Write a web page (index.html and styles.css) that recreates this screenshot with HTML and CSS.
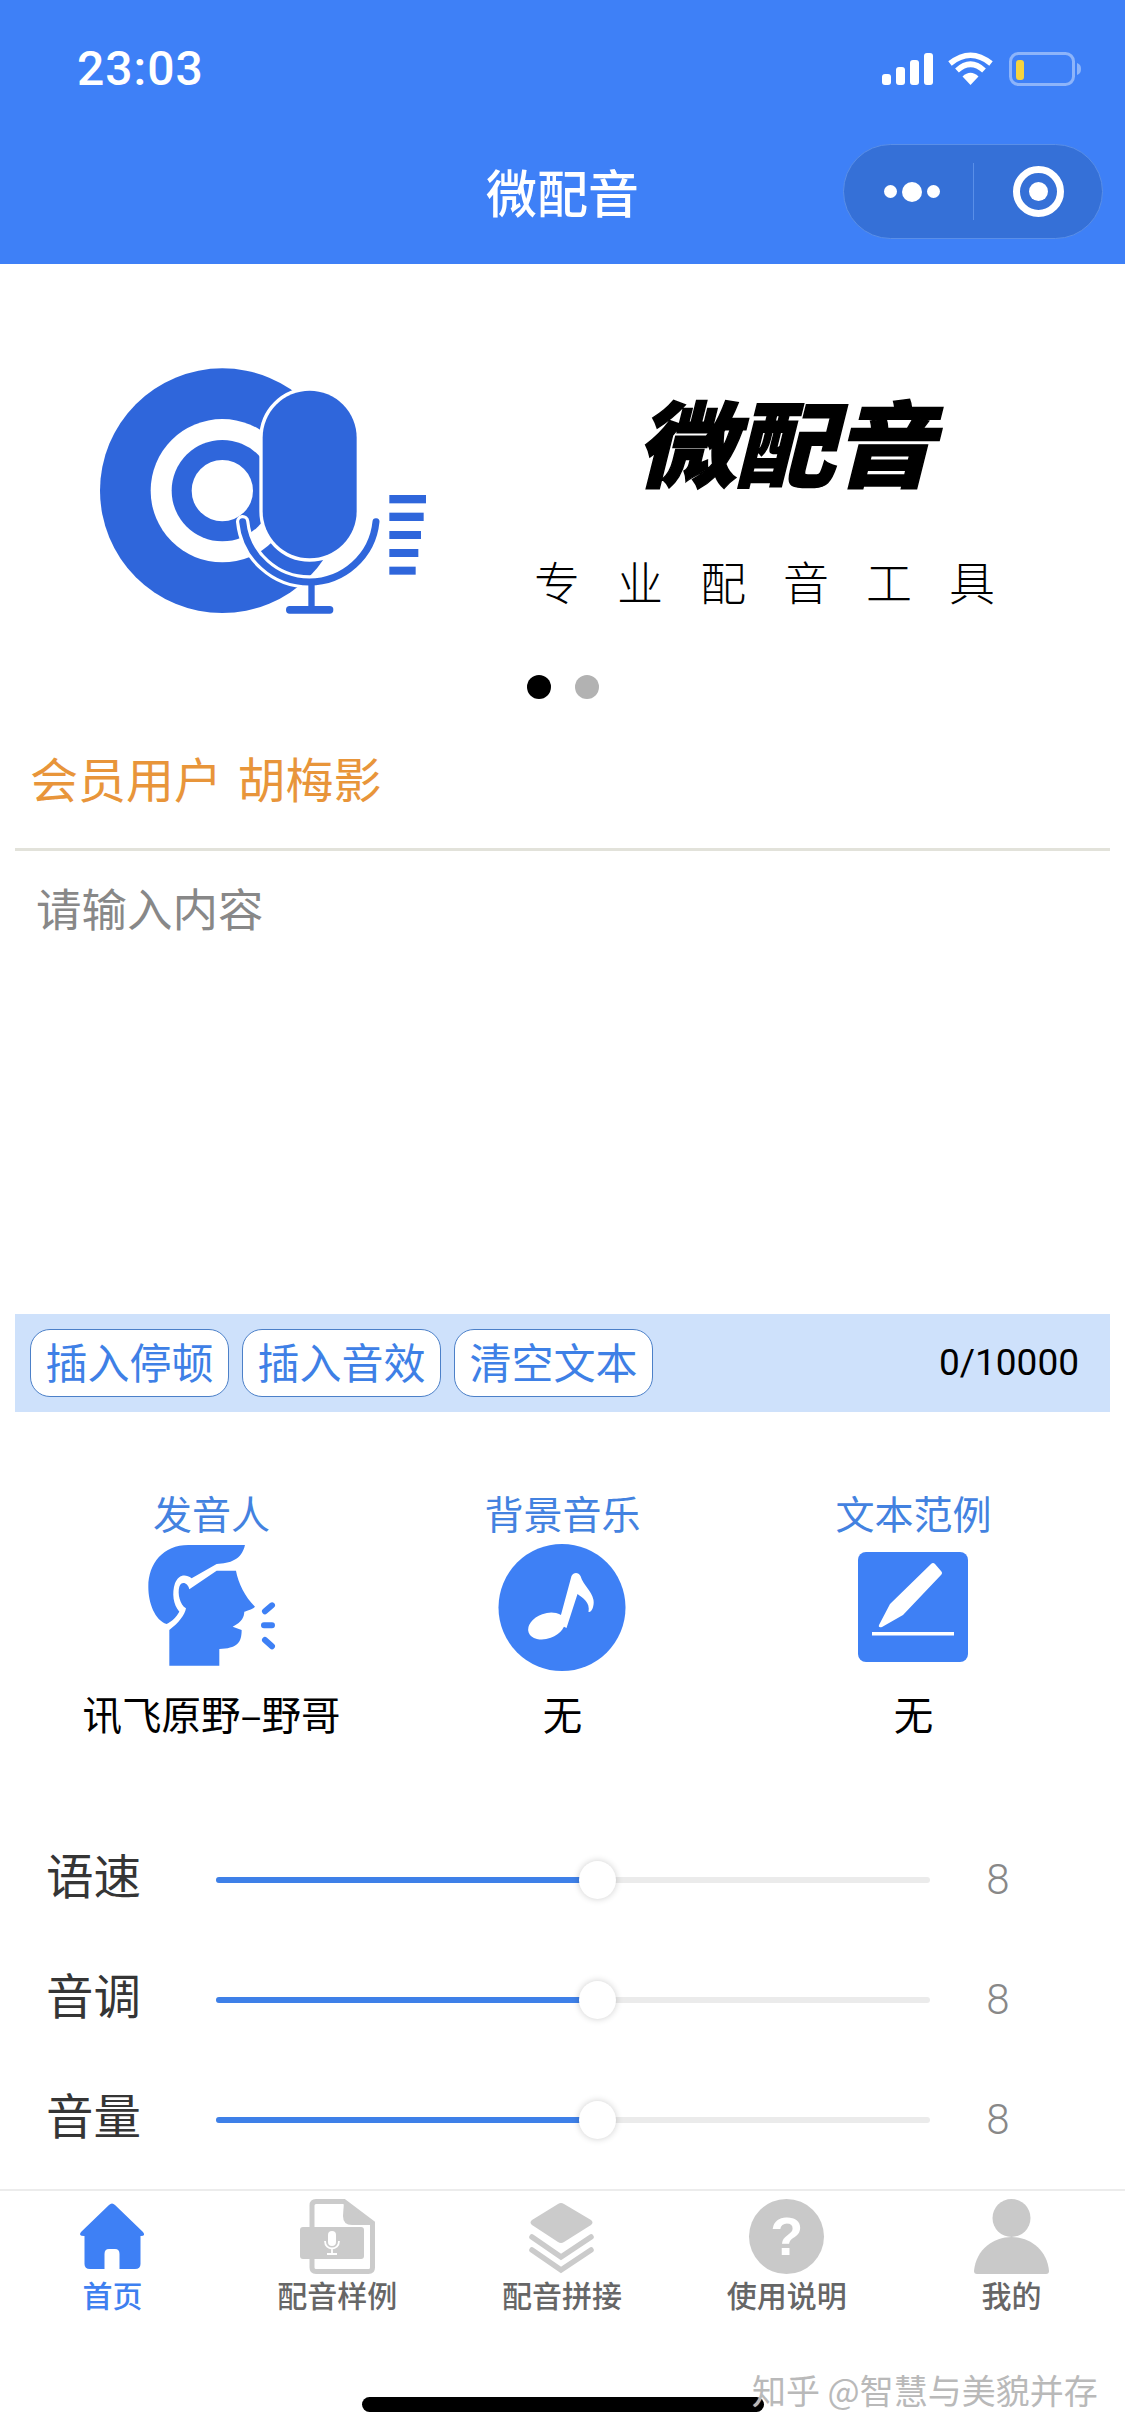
FILE: index.html
```html
<!DOCTYPE html>
<html lang="zh-CN">
<head>
<meta charset="utf-8">
<title>微配音</title>
<link rel="stylesheet" href="styles.css">
</head>
<body>
<div class="phone">
  <header class="header">
    <div class="status">
      <span class="time">23:03</span>
      <div class="status-icons">
        <svg class="sig" viewBox="0 0 51 32"><rect x="0" y="21" width="9" height="11" rx="3"/><rect x="14" y="14" width="9" height="18" rx="3"/><rect x="28" y="7" width="9" height="25" rx="3"/><rect x="42" y="0" width="9" height="32" rx="3"/></svg>
        <svg class="wifi" viewBox="0 0 47 33"><path d="M3 11.500Q23.500-5 44 11.500" fill="none" stroke="#fff" stroke-width="5.500"/><path d="M10 18.500Q23.500 6 37 18.500" fill="none" stroke="#fff" stroke-width="5.500"/><path d="M15.500 24.500Q23.500 17 31.500 24.500L23.500 33Z" fill="#fff"/></svg>
        <svg class="batt" viewBox="0 0 72 34"><rect x="1.500" y="1.500" width="63" height="31" rx="8" fill="none" stroke="#8db4fa" stroke-width="3"/><rect x="7" y="8" width="8" height="20" rx="3" fill="#f5d33f"/><path d="M68 11C71 12 72 14 72 17C72 20 71 22 68 23Z" fill="#8db4fa"/></svg>
      </div>
    </div>
    <div class="nav">
      <span></span>
      <h1 class="nav-title">微配音</h1>
      <div class="capsule">
        <div class="cap-more"><i class="d-s"></i><i class="d-l"></i><i class="d-s"></i></div>
        <div class="cap-line"></div>
        <div class="cap-close"><i></i></div>
      </div>
    </div>
  </header>

  <section class="banner">
    <div class="slide">
      <svg class="logo" viewBox="0 0 1200 900">
        <circle cx="487" cy="452" r="367" fill="#2f66db"/>
        <circle cx="487" cy="452" r="215" fill="#fff"/>
        <circle cx="487" cy="452" r="152" fill="#2f66db"/>
        <circle cx="487" cy="452" r="92" fill="#fff"/>
        <rect x="608" y="152" width="282" height="503" rx="141" fill="#fff" stroke="#fff" stroke-width="20"/>
        <path d="M548 545A201 201 0 0 0 948 545" fill="none" stroke="#fff" stroke-width="40" stroke-linecap="round"/>
        <path d="M548 545A201 201 0 0 0 948 545" fill="none" stroke="#2f66db" stroke-width="21" stroke-linecap="round"/>
        <rect x="608" y="152" width="282" height="503" rx="141" fill="#2f66db"/>
        <rect x="745" y="725" width="19" height="85" fill="#2f66db"/>
        <rect x="678" y="798" width="142" height="23" rx="11" fill="#2f66db"/>
        <g fill="#2f66db"><rect x="988" y="465" width="110" height="25"/><rect x="988" y="518" width="103" height="25"/><rect x="988" y="573" width="95" height="24"/><rect x="988" y="627" width="87" height="24"/><rect x="988" y="680" width="79" height="24"/></g>
      </svg>
      <div class="slide-text">
        <div class="brand">微配音</div>
        <div class="slogan">专业配音工具</div>
      </div>
    </div>
    <div class="dots"><i class="dot dot-on"></i><i class="dot"></i></div>
  </section>

  <div class="member">会员用户&nbsp;&nbsp;胡梅影</div>
  <div class="editor">请输入内容</div>

  <div class="toolbar">
    <div class="tools">
      <span class="tool">插入停顿</span>
      <span class="tool">插入音效</span>
      <span class="tool">清空文本</span>
    </div>
    <span class="count">0/10000</span>
  </div>

  <section class="options">
    <div class="option">
      <div class="opt-label">发音人</div>
      <svg class="opt-icon" viewBox="0 0 350 127">
        <g transform="translate(24 -64) scale(.3333)" fill="#3e80f5">
          <path d="M555 195L385 195C310 195 265 250 265 320C265 370 285 420 320 432C335 425 350 410 358 395C340 375 335 340 345 310C355 285 375 280 395 295L470 252C510 250 545 240 555 195Z"/>
          <path d="M470 272L528 272C535 310 555 350 585 380C575 390 560 392 553 395C552 410 548 425 518 440L545 450C545 490 530 505 478 507L478 557L328 557L328 450C355 430 375 405 378 385C360 375 352 340 358 320C365 300 385 310 388 328Z"/>
          <path d="M615 394L636 376M612 436L636 436M615 480L636 499" stroke="#3e80f5" stroke-width="18" stroke-linecap="round"/>
        </g>
      </svg>
      <div class="opt-value">讯飞原野–野哥</div>
    </div>
    <div class="option">
      <div class="opt-label">背景音乐</div>
      <svg class="opt-icon" viewBox="0 0 350 127">
        <g transform="translate(111.500 0)">
          <circle cx="63.500" cy="63.500" r="63.500" fill="#3e80f5"/>
          <ellipse cx="48" cy="82" rx="19" ry="12.500" transform="rotate(-20 48 82)" fill="#fff"/>
          <path d="M60 80L73 32C75 28 80 28 82 32C85 42 93 46 95 56C96 62 93 69 90 68C92 58 84 54 79 50L68 84Z" fill="#fff"/>
        </g>
      </svg>
      <div class="opt-value">无</div>
    </div>
    <div class="option">
      <div class="opt-label">文本范例</div>
      <svg class="opt-icon" viewBox="0 0 350 127">
        <g transform="translate(120 8)">
          <rect width="110" height="110" rx="8" fill="#3e80f5"/>
          <path d="M21 73L32 52L73 12Q75 10 77 12L83 19Q85 21 83 23L45 63L24 75Q20 76 21 73Z" fill="#fff"/>
          <rect x="14" y="80" width="82" height="3.500" fill="#fff"/>
        </g>
      </svg>
      <div class="opt-value">无</div>
    </div>
  </section>

  <section class="sliders">
    <div class="slider-row"><span class="s-label">语速</span><div class="track"><div class="fill"></div><div class="thumb"></div></div><span class="s-value">8</span></div>
    <div class="slider-row"><span class="s-label">音调</span><div class="track"><div class="fill"></div><div class="thumb"></div></div><span class="s-value">8</span></div>
    <div class="slider-row"><span class="s-label">音量</span><div class="track"><div class="fill"></div><div class="thumb"></div></div><span class="s-value">8</span></div>
  </section>

  <nav class="tabbar">
    <div class="tab tab-on">
      <svg class="tab-icon" viewBox="0 0 75 75"><path d="M34 6Q37 3 40 6L68 33Q71 37 66 37L65.500 37L65.500 65Q65.500 70 60 70L44.500 70L44.500 55Q44.500 50 40 50L34 50Q29.500 50 29.500 55L29.500 70L15 70Q9.500 70 9.500 65L9.500 37L9 37Q3 37 6 33Z" fill="#3e80f5"/></svg>
      <span class="tab-text">首页</span>
    </div>
    <div class="tab">
      <svg class="tab-icon" viewBox="0 0 75 75"><path d="M44 2.500L16 2.500Q12 2.500 12 6.500L12 68.500Q12 72.500 16 72.500L68.500 72.500Q72.500 72.500 72.500 68.500L72.500 24Z" fill="none" stroke="#cbcbcb" stroke-width="5"/><path d="M44 2L73 24L73 26L52 26Q43 26 43 17Z" fill="#cbcbcb"/><rect x="0" y="28" width="64" height="32" rx="3" fill="#cbcbcb"/><rect x="28" y="32" width="8" height="15" rx="4" fill="#fff"/><path d="M25 42C25 52 39 52 39 42M32 49L32 54M27 55L37 55" fill="none" stroke="#fff" stroke-width="1.800"/></svg>
      <span class="tab-text">配音样例</span>
    </div>
    <div class="tab">
      <svg class="tab-icon" viewBox="0 0 75 75"><path d="M34 5Q37 3 40 5L67 21Q70 23.500 67 26L40 43Q37 45 34 43L8 26Q5 23.500 8 21Z" fill="#cbcbcb"/><path d="M8 38L37 58L67 38M8 51L37 71L67 51" fill="none" stroke="#cbcbcb" stroke-width="5.500" stroke-linecap="round"/></svg>
      <span class="tab-text">配音拼接</span>
    </div>
    <div class="tab">
      <div class="help">?</div>
      <span class="tab-text">使用说明</span>
    </div>
    <div class="tab">
      <svg class="tab-icon" viewBox="0 0 75 75"><circle cx="37.500" cy="19" r="19" fill="#c9c9c9"/><path d="M0 72C2 50 20 38 37.500 38C55 38 73 50 75 72Q75 75 72 75L3 75Q0 75 0 72Z" fill="#c9c9c9"/></svg>
      <span class="tab-text">我的</span>
    </div>
  </nav>

  <div class="home-bar"></div>
  <div class="watermark">知乎 @智慧与美貌并存</div>
</div>
</body>
</html>
```

FILE: styles.css
```css
* { box-sizing: border-box; }
html, body { margin: 0; padding: 0; background: #fff; }
body { font-family: "Noto Sans CJK SC", "Noto Sans", sans-serif; color: #000; }
.phone { position: relative; width: 1125px; height: 2436px; display: flex; flex-direction: column; overflow: hidden; background: #fff; }

.header { height: 264px; background: #3e80f7; color: #fff; flex: none; }
.status { height: 144px; display: flex; justify-content: space-between; align-items: flex-start; padding: 52px 44px 0 77px; }
.time { font: 500 48px/34px Roboto, sans-serif; letter-spacing: 1px; }
.status-icons { display: flex; align-items: flex-start; }
.sig { width: 51px; height: 32px; fill: #fff; margin-top: 1px; }
.wifi { width: 47px; height: 33px; margin-left: 14px; }
.batt { width: 72px; height: 34px; margin-left: 15px; }

.nav { display: grid; grid-template-columns: 1fr auto 1fr; padding: 0 22px; height: 95px; align-items: center; }
.nav-title { margin: 0; font-size: 51px; line-height: 93px; font-weight: 500; }
.capsule { justify-self: end; width: 260px; height: 95px; border-radius: 48px; background: #3570d7; border: 1px solid #5a8fe8; display: flex; align-items: center; }
.cap-more { width: 129px; padding-left: 7px; display: flex; align-items: center; justify-content: center; gap: 5px; }
.cap-more i { display: block; border-radius: 50%; background: #fff; }
.d-s { width: 13px; height: 13px; }
.d-l { width: 20px; height: 20px; }
.cap-line { width: 1px; height: 57px; background: #5a8fe8; }
.cap-close { flex: 1; display: flex; justify-content: center; }
.cap-close i { display: block; width: 51px; height: 51px; border-radius: 50%; border: 7px solid #fff; position: relative; }
.cap-close i::after { content: ""; position: absolute; left: 9px; top: 9px; width: 19px; height: 19px; border-radius: 50%; background: #fff; }

.banner { height: 456px; padding-top: 76px; flex: none; }
.slide { display: flex; height: 300px; }
.logo { width: 400px; height: 300px; margin-left: 60px; flex: none; }
.slide-text { padding-left: 74px; }
.brand { margin: 50px 0 0 112px; font-size: 100px; line-height: 100px; font-weight: 900; letter-spacing: -1px; transform: skewX(-14deg) scaleY(.93); -webkit-text-stroke: 1.500px #000; white-space: nowrap; }
.slogan { margin-top: 63px; font-size: 46px; line-height: 54px; font-weight: 300; letter-spacing: 37px; white-space: nowrap; }
.dots { display: flex; gap: 24px; margin: 35px 0 0 527px; }
.dot { display: block; width: 24px; height: 24px; border-radius: 50%; background: #b2b2b2; }
.dot-on { background: #000; }

.member { height: 131px; margin: 0 15px; padding: 30px 0 0 15px; font-size: 48px; line-height: 54px; word-spacing: -3px; color: #e8953a; border-bottom: 3px solid #e2e2da; flex: none; white-space: nowrap; }
.editor { height: 463px; margin: 0 15px; padding: 29px 0 0 21px; font-size: 45.500px; line-height: 54px; color: #888; flex: none; }

.toolbar { height: 98px; margin: 0 15px; padding: 0 31px 0 15px; background: #cee1fb; display: flex; justify-content: space-between; align-items: center; flex: none; }
.tools { display: flex; gap: 13px; }
.tool { width: 199px; height: 68px; border: 1px solid #4c80c8; border-radius: 20px; background: #fff; color: #3e80e6; font-size: 42px; line-height: 62px; text-align: center; }
.count { font: 400 37px/44px Roboto, sans-serif; }

.options { display: grid; grid-template-columns: repeat(3, 1fr); padding: 80px 36px 0; flex: none; }
.option { text-align: center; }
.opt-label { font-size: 39px; line-height: 40px; color: #4382e0; margin-bottom: 12px; }
.opt-icon { display: block; width: 350px; height: 127px; }
.opt-value { margin-top: 22px; font-size: 39.500px; line-height: 40px; }

.sliders { margin-top: 87px; flex: none; }
.slider-row { height: 120px; display: flex; align-items: center; padding-left: 46px; }
.s-label { width: 170px; margin-bottom: 12px; font-size: 47.500px; line-height: 54px; color: #353535; }
.track { position: relative; width: 714px; height: 6px; border-radius: 3px; background: #ebebeb; }
.fill { width: 364px; height: 6px; border-radius: 3px 0 0 3px; background: #3e80e8; }
.thumb { position: absolute; left: 363px; top: -16px; width: 37px; height: 38px; border-radius: 50%; background: #fff; box-shadow: 0 0 7px rgba(0,0,0,.2); }
.s-value { width: 136px; text-align: center; font: 300 42px/48px Roboto, sans-serif; color: #888; }

.tabbar { margin-top: auto; height: 247px; border-top: 2px solid #ececec; padding: 8px 1px 0 0; display: grid; grid-template-columns: repeat(5, 1fr); flex: none; }
.tab { display: flex; flex-direction: column; align-items: center; }
.tab-icon { display: block; width: 75px; height: 75px; }
.help { width: 75px; height: 75px; border-radius: 50%; background: #c9c9c9; color: #fff; font: 700 54px/75px "Liberation Sans", sans-serif; text-align: center; }
.tab-text { margin-top: 2px; font-size: 30px; line-height: 36px; font-weight: 500; color: #666; }
.tab-on .tab-text { color: #3e80f0; }

.home-bar { position: absolute; left: 362px; top: 2397px; width: 402px; height: 15px; border-radius: 8px; background: #000; }
.watermark { position: absolute; left: 752px; top: 2368px; font-size: 34px; line-height: 44px; color: #b9b9b9; white-space: nowrap; text-shadow: 0 0 1px #fff; }
```
